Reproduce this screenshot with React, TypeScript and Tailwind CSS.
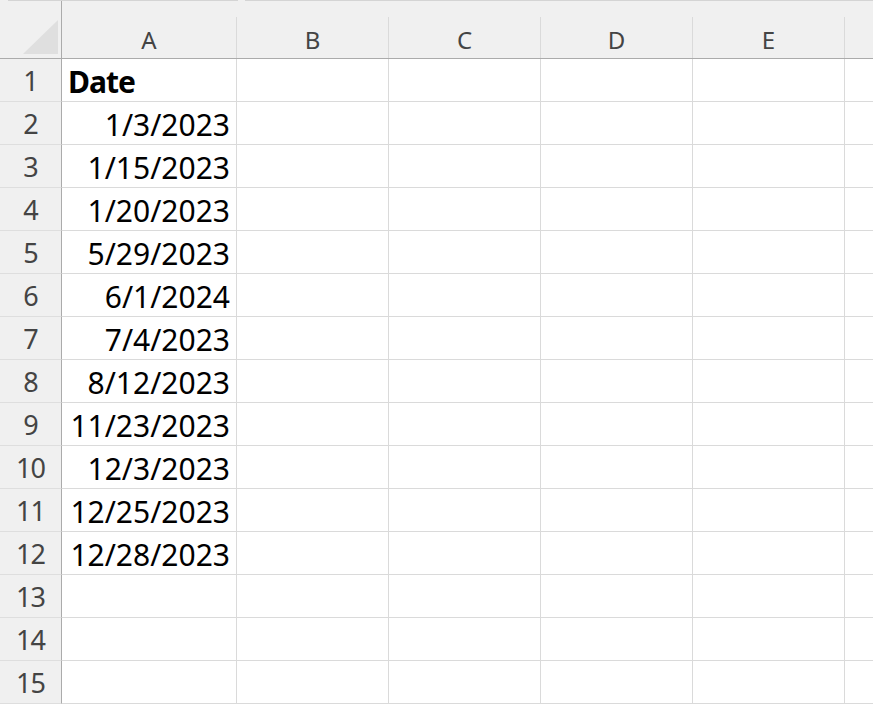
import React from 'react'

const dates = [
  '1/3/2023', '1/15/2023', '1/20/2023', '5/29/2023', '6/1/2024', '7/4/2023',
  '8/12/2023', '11/23/2023', '12/3/2023', '12/25/2023', '12/28/2023',
]
const cols = ['B', 'C', 'D', 'E']
const font = { fontFamily: '"Noto Sans", "Open Sans", sans-serif' }

function HeaderCell({ label, className }: { label: string; className: string }) {
  return (
    <div className={`${className} flex flex-col`}>
      <div className="h-[17px]" />
      <div className="flex-1 flex items-center justify-center border-r border-[#dadada] text-[24px] text-[#444444] pt-[4px]">
        {label}
      </div>
    </div>
  )
}

export default function App() {
  const rows = Array.from({ length: 15 }, (_, i) => i + 1)
  return (
    <div className="w-[873px] h-[708px] overflow-hidden bg-white" style={font}>
      {/* column headers */}
      <div className="relative flex h-[59px] bg-[#f0f0f0] border-b border-[#ababab]">
        <div className="absolute top-0 left-[8px] w-[230px] h-px bg-[#d4d4d4]" />
        <div className="absolute top-0 left-[245px] right-0 h-px bg-[#d4d4d4]" />
        <div className="w-[62px] shrink-0 flex flex-col border-r border-[#ababab]">
          <svg width="61" height="58" viewBox="0 0 61 58">
            <polygon points="23,54 58,54 58,20" fill="#dfdfdf" />
          </svg>
        </div>
        <HeaderCell label="A" className="w-[175px] shrink-0" />
        {cols.map((c) => (
          <HeaderCell key={c} label={c} className="w-[152px] shrink-0" />
        ))}
        <div className="flex-1" />
      </div>

      {rows.map((r) => (
        <div key={r} className="flex h-[43px]">
          <div className="w-[62px] shrink-0 bg-[#f0f0f0] border-r border-[#ababab] border-b border-b-[#dedede] flex items-center justify-center text-[27px] tracking-[-1px] text-[#444444] pt-[3px]">
            {r}
          </div>
          <div
            className={`w-[175px] shrink-0 border-r border-b border-[#dadada] flex items-center px-[6px] pt-[3px] text-[30px] text-black ${r === 1 ? 'justify-start font-bold tracking-[-1px]' : 'justify-end'}`}
          >
            {r === 1 ? 'Date' : dates[r - 2] ?? ''}
          </div>
          {cols.map((c) => (
            <div key={c} className="w-[152px] shrink-0 border-r border-b border-[#dadada]" />
          ))}
          <div className="flex-1 border-b border-[#dadada]" />
        </div>
      ))}
    </div>
  )
}
